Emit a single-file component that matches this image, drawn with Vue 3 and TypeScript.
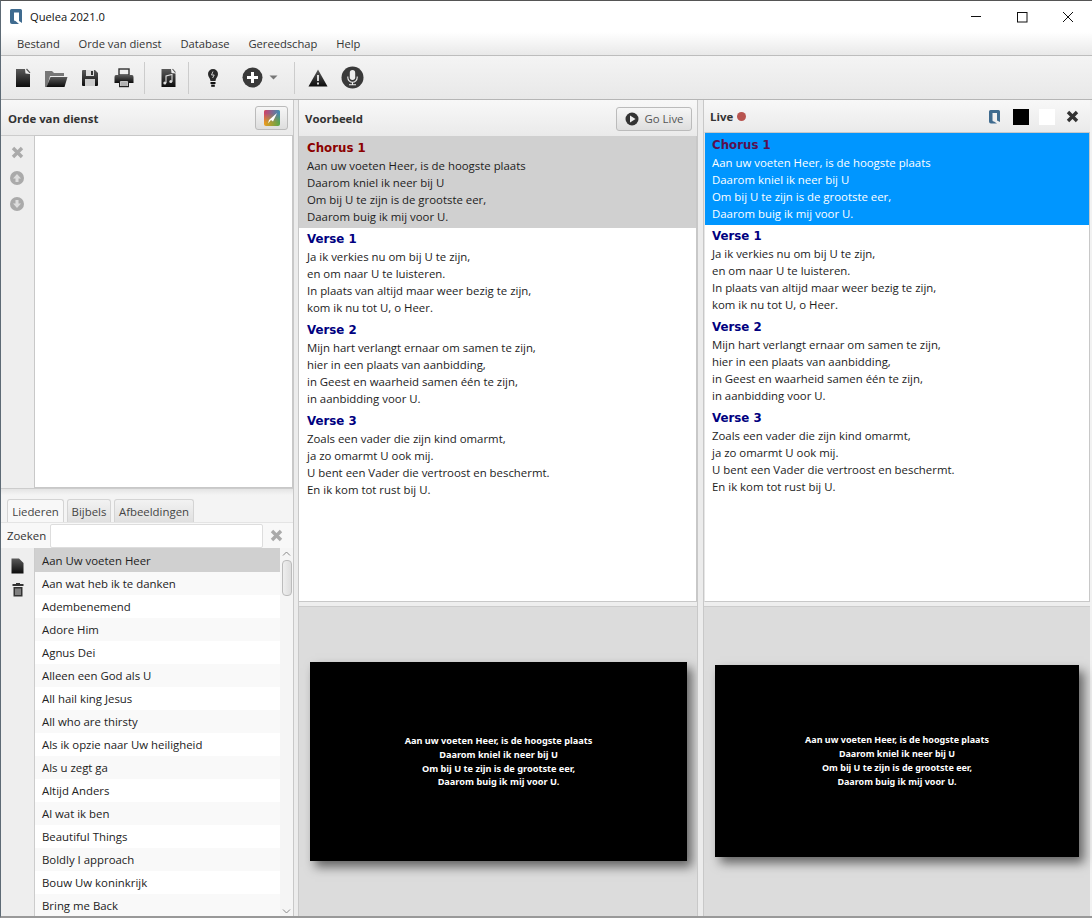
<script setup lang="ts">
interface Section {
  title: string;
  lines: string[];
}

const menus = ["Bestand", "Orde van dienst", "Database", "Gereedschap", "Help"];

const sections: Section[] = [
  {
    title: "Chorus 1",
    lines: [
      "Aan uw voeten Heer, is de hoogste plaats",
      "Daarom kniel ik neer bij U",
      "Om bij U te zijn is de grootste eer,",
      "Daarom buig ik mij voor U.",
    ],
  },
  {
    title: "Verse 1",
    lines: [
      "Ja ik verkies nu om bij U te zijn,",
      "en om naar U te luisteren.",
      "In plaats van altijd maar weer bezig te zijn,",
      "kom ik nu tot U, o Heer.",
    ],
  },
  {
    title: "Verse 2",
    lines: [
      "Mijn hart verlangt ernaar om samen te zijn,",
      "hier in een plaats van aanbidding,",
      "in Geest en waarheid samen één te zijn,",
      "in aanbidding voor U.",
    ],
  },
  {
    title: "Verse 3",
    lines: [
      "Zoals een vader die zijn kind omarmt,",
      "ja zo omarmt U ook mij.",
      "U bent een Vader die vertroost en beschermt.",
      "En ik kom tot rust bij U.",
    ],
  },
];

const songs = [
  "Aan Uw voeten Heer",
  "Aan wat heb ik te danken",
  "Adembenemend",
  "Adore Him",
  "Agnus Dei",
  "Alleen een God als U",
  "All hail king Jesus",
  "All who are thirsty",
  "Als ik opzie naar Uw heiligheid",
  "Als u zegt ga",
  "Altijd Anders",
  "Al wat ik ben",
  "Beautiful Things",
  "Boldly I approach",
  "Bouw Uw koninkrijk",
  "Bring me Back",
];

const slide = sections[0].lines;
</script>

<template>
  <div class="window">
    <header class="titlebar">
      <svg class="app-logo" width="14" height="17" viewBox="0 0 14 17">
        <path d="M1 2.5 Q1 1 2.5 1 H11.5 Q13 1 13 2.5 V15 L10 13 V4.5 H5 V12 Q5 13 6.5 13 L10 16 H3 Q1 16 1 14 Z" fill="#3f6b8f" />
      </svg>
      <span class="app-title">Quelea 2021.0</span>
      <span class="spacer"></span>
      <svg class="win-btn" width="12" height="12" viewBox="0 0 12 12"><path d="M1 5.5 H11" stroke="#111" /></svg>
      <svg class="win-btn" width="12" height="12" viewBox="0 0 12 12"><rect x="1.5" y="1.5" width="9.5" height="9.5" fill="none" stroke="#111" /></svg>
      <svg class="win-btn" width="12" height="12" viewBox="0 0 12 12"><path d="M1 1 L11 11 M11 1 L1 11" stroke="#111" /></svg>
    </header>

    <nav class="menubar">
      <span v-for="m in menus" :key="m" class="menu-item">{{ m }}</span>
    </nav>

    <div class="toolbar">
      <svg class="tool" width="16" height="20" viewBox="0 0 16 20">
        <defs>
          <linearGradient id="dark" x1="0" y1="0" x2="0" y2="1">
            <stop offset="0" stop-color="#5a5a5a" />
            <stop offset="1" stop-color="#0c0c0c" />
          </linearGradient>
        </defs>
        <path d="M1 1 H10 L10.5 5.5 L15 6 V19 H1 Z" fill="url(#dark)" />
        <path d="M11.5 1 L15 4.8" stroke="#555" stroke-width="1.2" />
      </svg>
      <svg class="tool t-open" width="24" height="20" viewBox="0 0 24 20">
        <path d="M1 19 V3 H8 L10 5 H20 V8 H6 L3 19 Z" fill="#777" />
        <path d="M2.5 19 L6.5 9 H23.5 L20.5 19 Z" fill="url(#dark)" />
      </svg>
      <svg class="tool t-save" width="18" height="18" viewBox="0 0 18 18">
        <path d="M1 2 Q1 1 2 1 H14 L17 4 V16 Q17 17 16 17 H2 Q1 17 1 16 Z" fill="url(#dark)" />
        <rect x="5" y="1" width="8" height="6" fill="#ddd" />
        <rect x="10" y="2" width="2" height="4" fill="#333" />
        <rect x="4" y="10" width="10" height="7" fill="#ccc" />
      </svg>
      <svg class="tool t-print" width="20" height="20" viewBox="0 0 20 20">
        <rect x="5" y="1" width="10" height="6" fill="#eee" stroke="#333" stroke-width="1.4" />
        <path d="M2 7 H18 Q19.5 7 19.5 9 V15 H15 V13 H5 V15 H0.5 V9 Q0.5 7 2 7 Z" fill="url(#dark)" />
        <rect x="5.6" y="12.6" width="8.8" height="6" fill="#eee" stroke="#222" stroke-width="1.2" />
        <path d="M7 15 H13 M7 17 H13" stroke="#555" stroke-width="0.8" />
      </svg>
      <span class="tool-sep"></span>
      <svg class="tool t-song" width="15" height="20" viewBox="0 0 15 20">
        <path d="M0.5 1 H10 L10.5 5 L14.5 5.5 V19 H0.5 Z" fill="url(#dark)" />
        <path d="M5 15 V8 L11 6.5 V13.5" fill="none" stroke="#ddd" stroke-width="1.1" />
        <circle cx="3.8" cy="15" r="1.5" fill="#ddd" />
        <circle cx="9.8" cy="13.5" r="1.5" fill="#ddd" />
        <path d="M11.5 1 L14.5 4.5" stroke="#555" stroke-width="1.1" />
      </svg>
      <span class="tool-sep s2"></span>
      <svg class="tool t-bulb" width="12" height="20" viewBox="0 0 12 20">
        <path d="M6 1 A5 5 0 0 1 11 6 C11 9 8.7 10 8.5 13 H3.5 C3.3 10 1 9 1 6 A5 5 0 0 1 6 1 Z" fill="#2a2a2a" />
        <path d="M6 3.5 L4.5 7 H7.2 L5.6 10" fill="none" stroke="#ddd" stroke-width="0.9" />
        <rect x="3.5" y="14" width="5" height="2" fill="#111" />
        <rect x="4.2" y="16.6" width="3.6" height="2.2" fill="#111" />
      </svg>
      <svg class="tool t-plus" width="21" height="21" viewBox="0 0 21 21">
        <circle cx="10.5" cy="10.5" r="10" fill="#3a3a3a" />
        <path d="M10.5 5 V16 M5 10.5 H16" stroke="#fff" stroke-width="3" />
      </svg>
      <svg class="tool t-caret" width="9" height="5" viewBox="0 0 9 5"><path d="M0.5 0.5 H8.5 L4.5 4.5 Z" fill="#777" /></svg>
      <span class="tool-sep s3"></span>
      <svg class="tool t-warn" width="20" height="18" viewBox="0 0 20 18">
        <path d="M10 0.5 L19.5 17.5 H0.5 Z" fill="url(#dark)" />
        <path d="M10 6 V12 M10 13.5 V15.5" stroke="#eee" stroke-width="1.8" />
      </svg>
      <svg class="tool t-mic" width="23" height="23" viewBox="0 0 23 23">
        <circle cx="11.5" cy="11.5" r="11" fill="#3a3a3a" />
        <rect x="8.8" y="4" width="5.4" height="10" rx="2.7" fill="#eee" />
        <path d="M6.8 10.5 V11.5 A4.7 4.7 0 0 0 16.2 11.5 V10.5 M11.5 16 V18.5 M8 18.8 H15" fill="none" stroke="#eee" stroke-width="1.1" />
      </svg>
    </div>

    <main class="panes">
      <section class="pane-left">
        <div class="schedule">
          <div class="pane-head head-left">
            <strong class="pane-title">Orde van dienst</strong>
            <span class="spacer"></span>
            <button class="btn theme-btn">
              <svg width="16" height="16" viewBox="0 0 16 16">
                <defs>
                  <linearGradient id="rain" x1="0" y1="0" x2="1" y2="0">
                    <stop offset="0" stop-color="#d0406a" />
                    <stop offset="1" stop-color="#3b8fb5" />
                  </linearGradient>
                  <linearGradient id="rain2" x1="0" y1="0" x2="1" y2="0">
                    <stop offset="0" stop-color="#ee9a1e" />
                    <stop offset="1" stop-color="#54a64c" />
                  </linearGradient>
                  <linearGradient id="rainMix" x1="0" y1="0" x2="0" y2="1">
                    <stop offset="0.2" stop-color="#fff" />
                    <stop offset="0.8" stop-color="#000" />
                  </linearGradient>
                  <mask id="rainMask"><rect width="16" height="16" fill="url(#rainMix)" /></mask>
                </defs>
                <rect width="16" height="16" rx="2" fill="url(#rain2)" />
                <rect width="16" height="16" rx="2" fill="url(#rain)" mask="url(#rainMask)" />
                <path d="M5 10 L13 3 L9 11.5 L7 10 L4 13.5 Z" fill="#fff" />
              </svg>
            </button>
          </div>
          <div class="schedule-body">
            <div class="side-tools">
              <svg width="13" height="13" viewBox="0 0 13 13"><path d="M2 2 L11 11 M11 2 L2 11" stroke="#aaa" stroke-width="3.4" /></svg>
              <svg width="14" height="14" viewBox="0 0 14 14"><circle cx="7" cy="7" r="7" fill="#aaa" /><path d="M7 3 L11 7.5 H8.5 V11 H5.5 V7.5 H3 Z" fill="#ddd" /></svg>
              <svg width="14" height="14" viewBox="0 0 14 14"><circle cx="7" cy="7" r="7" fill="#aaa" /><path d="M7 11 L11 6.5 H8.5 V3 H5.5 V6.5 H3 Z" fill="#ddd" /></svg>
            </div>
            <div class="schedule-list"></div>
          </div>
        </div>

        <div class="splitter-h"></div>

        <div class="library">
          <div class="tabs">
            <span class="tab active t1">Liederen</span>
            <span class="tab t2">Bijbels</span>
            <span class="tab t3">Afbeeldingen</span>
          </div>
          <div class="search-row">
            <label class="search-label">Zoeken</label>
            <div class="search-input"></div>
            <svg class="search-clear" width="13" height="13" viewBox="0 0 13 13"><path d="M2 2 L11 11 M11 2 L2 11" stroke="#aaa" stroke-width="3.4" /></svg>
          </div>
          <div class="song-body">
            <div class="song-tools">
              <svg width="13" height="16" viewBox="0 0 13 16"><path d="M0.5 0.5 H8 L12.5 5 V15.5 H0.5 Z" fill="url(#dark)" /></svg>
              <svg width="12" height="15" viewBox="0 0 12 15">
                <path d="M4 1 H8 V2 H11.5 V4 H0.5 V2 H4 Z" fill="#333" />
                <path d="M1.5 5 H10.5 V14.5 H1.5 Z" fill="#333" />
                <path d="M4 6.5 V13 M6 6.5 V13 M8 6.5 V13" stroke="#ccc" />
              </svg>
            </div>
            <ul class="song-list">
              <li v-for="(s, i) in songs" :key="s" class="song" :class="{ selected: i === 0, odd: i % 2 === 1 }">{{ s }}</li>
            </ul>
            <div class="scrollbar">
              <svg class="arrow" width="9" height="5" viewBox="0 0 9 5"><path d="M1 4.5 L4.5 1 L8 4.5" fill="none" stroke="#888" /></svg>
              <div class="thumb"></div>
              <span class="spacer"></span>
              <svg class="arrow" width="9" height="5" viewBox="0 0 9 5"><path d="M1 0.5 L4.5 4 L8 0.5" fill="none" stroke="#888" /></svg>
            </div>
          </div>
        </div>
      </section>

      <div class="splitter-v"></div>

      <section class="pane-mid">
        <div class="pane-head head-mid">
          <strong class="pane-title">Voorbeeld</strong>
          <span class="spacer"></span>
          <button class="btn go-live">
            <svg width="14" height="14" viewBox="0 0 14 14"><circle cx="7" cy="7" r="6.5" fill="#333" /><path d="M5 3.5 L10.5 7 L5 10.5 Z" fill="#eee" /></svg>
            <span>Go Live</span>
          </button>
        </div>
        <div class="lyrics lyrics-mid">
          <div v-for="(sec, i) in sections" :key="sec.title" class="block" :class="{ 'sel-grey': i === 0 }">
            <div class="block-title" :class="{ chorus: i === 0 }">{{ sec.title }}</div>
            <div v-for="l in sec.lines" :key="l" class="line">{{ l }}</div>
          </div>
        </div>
        <div class="splitter-s"></div>
        <div class="stage stage-mid">
          <div class="screen screen-mid">
            <div v-for="l in slide" :key="l">{{ l }}</div>
          </div>
        </div>
      </section>

      <div class="splitter-v sv2"></div>

      <section class="pane-right">
        <div class="pane-head head-right">
          <strong class="pane-title live">Live</strong>
          <span class="rec"></span>
          <span class="spacer"></span>
          <svg class="live-logo" width="13" height="16" viewBox="0 0 13 16">
            <path d="M1 2.5 Q1 1 2.5 1 H10.5 Q12 1 12 2.5 V13 L9 11.5 V4 H4.5 V11.5 Q4.5 12.5 6 12.5 L9 14.5 H3 Q1 14.5 1 12.5 Z" fill="#3f6b8f" />
          </svg>
          <span class="sw black"></span>
          <span class="sw white"></span>
          <svg width="13" height="13" viewBox="0 0 13 13"><path d="M2 2 L11 11 M11 2 L2 11" stroke="#333" stroke-width="3.4" /></svg>
        </div>
        <div class="lyrics lyrics-right">
          <div v-for="(sec, i) in sections" :key="sec.title" class="block" :class="{ 'sel-blue': i === 0 }">
            <div class="block-title" :class="{ chorus: i === 0 }">{{ sec.title }}</div>
            <div v-for="l in sec.lines" :key="l" class="line">{{ l }}</div>
          </div>
        </div>
        <div class="splitter-s"></div>
        <div class="stage stage-right">
          <div class="screen screen-right">
            <div v-for="l in slide" :key="l">{{ l }}</div>
          </div>
        </div>
      </section>
    </main>
  </div>
</template>

<style>
html, body { margin: 0; background: #fff; }
</style>

<style scoped>
.window {
  width: 1092px;
  height: 918px;
  box-sizing: border-box;
  overflow: hidden;
  display: flex;
  flex-direction: column;
  border-top: 1px solid #555;
  border-left: 1px solid #5d6a75;
  border-bottom: 2px solid #999;
  font-family: "Open Sans", "Noto Sans", sans-serif;
  font-size: 11.4px;
  color: #1c1c1c;
  background: #f2f2f2;
}
.spacer { flex: 1; }

.titlebar {
  height: 31px;
  flex: none;
  display: flex;
  align-items: center;
  background: #fff;
  padding-left: 8px;
}
.app-title { margin-left: 7px; font-size: 11.2px; color: #111; }
.win-btn { margin-left: 34px; }
.win-btn:last-child { margin-right: 18px; }

.menubar {
  height: 23px;
  flex: none;
  display: flex;
  align-items: center;
  gap: 18.8px;
  padding-left: 16px;
  border-bottom: 1px solid #bdbdbd;
  background: linear-gradient(#fff, #e9e9e9);
  color: #333;
  font-size: 11.2px;
}

.toolbar {
  height: 43px;
  flex: none;
  display: flex;
  align-items: center;
  padding-left: 14px;
  background: linear-gradient(#f4f4f4, #e8e8e8);
  border-bottom: 1px solid #b5b5b5;
}
.tool-sep { width: 1px; height: 32px; background: #ccc; margin: 0 0 0 10px; }
.t-open { margin-left: 13px; }
.t-save { margin-left: 13px; }
.t-print { margin-left: 15px; }
.t-song { margin-left: 16px; }
.tool-sep.s2 { margin-left: 12px; }
.t-bulb { margin-left: 18px; }
.t-plus { margin-left: 23px; }
.t-caret { margin-left: 6px; }
.tool-sep.s3 { margin-left: 16px; }
.t-warn { margin-left: 13px; }
.t-mic { margin-left: 13px; }

.panes { flex: 1; min-height: 0; display: flex; }
.pane-left { width: 292px; flex: none; display: flex; flex-direction: column; background: #f4f4f4; }
.pane-mid { width: 398px; flex: none; display: flex; flex-direction: column; }
.pane-right { flex: 1; min-width: 0; display: flex; flex-direction: column; margin-right: 2px; }
.splitter-v {
  width: 6px;
  flex: none;
  background: #ececec;
  border-left: 1px solid #c8c8c8;
  border-right: 1px solid #c8c8c8;
  box-sizing: border-box;
}
.sv2 { width: 7px; }

.pane-head {
  flex: none;
  display: flex;
  align-items: center;
  box-sizing: border-box;
  background: linear-gradient(#f8f8f8, #eaeaea);
}
.pane-title { color: #333; font-weight: 700; font-size: 11.4px; }
.head-left { height: 35px; padding: 1px 5px 0 7px; }
.head-mid { height: 36px; padding: 1px 5px 0 6px; }
.head-right { height: 32px; padding: 1px 11px 0 6px; gap: 0; }

.btn {
  display: flex;
  align-items: center;
  justify-content: center;
  border: 1px solid #bbb;
  border-radius: 3px;
  background: linear-gradient(#f6f6f6, #dedede);
  padding: 0;
  font: inherit;
  color: #555;
}
.theme-btn { width: 33px; height: 24px; }
.go-live { width: 76px; height: 24px; gap: 6px; }

.schedule { flex: none; height: 388px; display: flex; flex-direction: column; }
.schedule-body { flex: 1; min-height: 0; display: flex; }
.side-tools {
  width: 33px;
  flex: none;
  box-sizing: border-box;
  display: flex;
  flex-direction: column;
  align-items: center;
  gap: 12px;
  padding: 10px 1px 0 0;
  background: #eee;
  border-top: 1px solid #ccc;
}
.schedule-list { flex: 1; background: #fff; border: 1px solid #c8c8c8; }
.splitter-h { height: 7px; flex: none; background: linear-gradient(#e4e4e4, #f4f4f4); border-top: 1px solid #ccc; box-sizing: border-box; }

.library { flex: 1; min-height: 0; display: flex; flex-direction: column; }
.tabs { height: 27px; flex: none; display: flex; align-items: flex-end; gap: 3px; padding-left: 6px; box-sizing: border-box; }
.tab {
  height: 23px;
  box-sizing: border-box;
  display: flex;
  align-items: center;
  justify-content: center;
  border: 1px solid #d4d4d4;
  border-bottom: none;
  border-radius: 3px 3px 0 0;
  background: linear-gradient(#f2f2f2, #e0e0e0);
  color: #444;
}
.t1 { width: 57px; }
.t2 { width: 44px; }
.t3 { width: 80px; }
.tab.active { background: #f8f8f8; }
.search-row { height: 26px; flex: none; display: flex; align-items: center; background: #f8f8f8; padding-left: 6px; border-top: 1px solid #e4e4e4; box-sizing: border-box; }
.search-label { color: #333; width: 43px; flex: none; }
.search-input { width: 213px; height: 24px; background: #fff; border: 1px solid #ddd; box-sizing: border-box; border-radius: 2px; }
.search-clear { margin-left: 7px; }

.song-body { flex: 1; min-height: 0; display: flex; background: #fff; }
.song-tools {
  width: 33px;
  flex: none;
  display: flex;
  flex-direction: column;
  align-items: center;
  gap: 8px;
  padding: 10px 0 0 0;
  box-sizing: border-box;
  background: #eee;
}
.song-list { list-style: none; margin: 0; padding: 0; flex: 1; min-width: 0; overflow: hidden; border-left: 1px solid #ccc; }
.song { height: 23px; line-height: 23px; padding-left: 7px; color: #222; background: #fff; }
.song.odd { background: #f9f9f9; }
.song.selected { background: #d0d0d0; height: 24px; line-height: 25px; }
.scrollbar { width: 13px; flex: none; display: flex; flex-direction: column; align-items: center; background: #f5f5f5; padding: 3px 0 2px; box-sizing: border-box; }
.thumb { width: 10px; height: 36px; margin-top: 4px; background: linear-gradient(90deg, #eee, #ddd); border: 1px solid #bbb; border-radius: 4px; box-sizing: border-box; }

.lyrics { flex: 1; min-height: 0; background: #fff; overflow: hidden; }
.lyrics-mid { border: 1px solid #c8c8c8; border-width: 0 1px 1px 0; }
.lyrics-right { border: 1px solid #c8c8c8; border-width: 1px 1px 1px 1px; border-left-color: #e6e6e6; }
.block { height: 91px; box-sizing: border-box; padding: 2px 8px 0; }
.lyrics-right .block { padding-left: 7px; }
.block-title {
  height: 18px;
  font-family: "DejaVu Sans", sans-serif;
  font-weight: 700;
  font-size: 11.8px;
  line-height: 18px;
  color: #00007f;
}
.block-title.chorus { color: #8b0000; }
.line { height: 17px; line-height: 17px; }
.block.sel-grey { background: #d0d0d0; height: 92px; padding-top: 3px; }
.block.sel-blue { background: #0096ff; height: 92px; padding-top: 3px; color: #fff; }
.sel-blue .block-title.chorus { color: #5a0f50; }

.splitter-s { height: 5px; flex: none; background: #eee; border-bottom: 1px solid #ccc; box-sizing: border-box; }
.stage { height: 309px; flex: none; box-sizing: border-box; background: #dcdcdc; }
.stage-mid { padding: 55px 0 0 11px; }
.stage-right { padding: 58px 0 0 11px; }
.screen {
  background: #000;
  color: #fff;
  font-family: "Noto Sans", sans-serif;
  font-weight: 700;
  text-align: center;
  display: flex;
  flex-direction: column;
  justify-content: center;
  box-sizing: border-box;
  box-shadow: 5px 6px 10px rgba(0, 0, 0, 0.55);
}
.screen-mid { width: 377px; height: 199px; font-size: 9.2px; line-height: 13.6px; }
.screen-right { width: 364px; height: 192px; font-size: 9px; line-height: 14px; }

.live { margin-right: 4px; }
.rec { width: 9px; height: 9px; border-radius: 50%; background: #b85450; }
.live-logo { margin-right: 12px; }
.sw { width: 16px; height: 16px; }
.sw.black { background: #000; margin-right: 10px; }
.sw.white { background: #fff; margin-right: 11px; }
</style>
